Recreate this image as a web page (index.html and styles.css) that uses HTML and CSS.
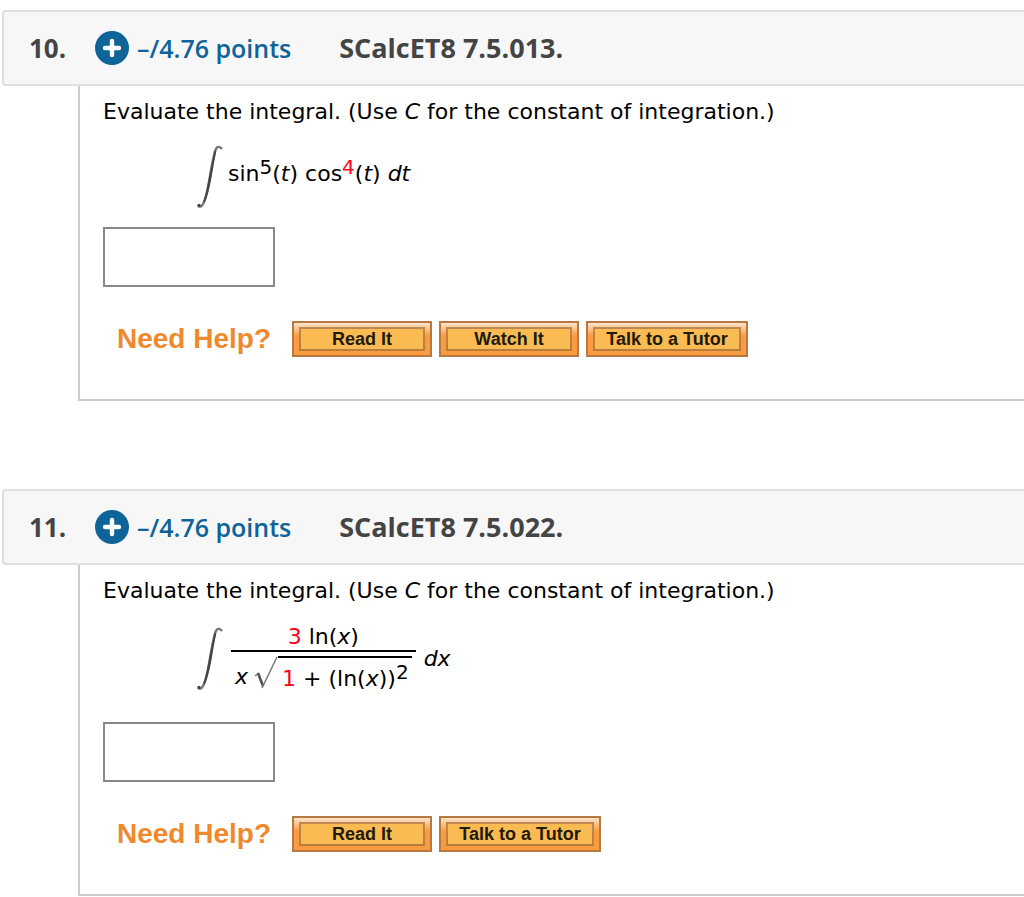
FILE: index.html
```html
<!DOCTYPE html>
<html lang="en">
<head>
<meta charset="utf-8">
<title>Homework questions</title>
<link rel="stylesheet" href="styles.css">
</head>
<body>
<svg class="defs" width="0" height="0" aria-hidden="true">
  <symbol id="integral" viewBox="0 0 26 64">
    <path d="M25 4C23 1 20 1 18.500 5C16.500 10 14.500 22 12.500 34C10.500 46 8.500 55 6 59C4.500 62 2.500 62 1 61" fill="none" stroke="#777" stroke-width="2.400"/>
    <path d="M18.500 6C16 15 14.500 25 12.500 34C10.500 45 9 52 7 57C10 51 12 42 14 31C15.500 21 17 13 18.500 6Z" fill="#222" stroke="#444" stroke-width="1.600"/>
    <circle cx="2" cy="60.500" r="1.700" fill="#444"/>
  </symbol>
  <symbol id="plus" viewBox="0 0 34 34">
    <circle cx="17" cy="17" r="17" fill="#0e6399"/>
    <path d="M17 10V24M10 17H24" stroke="#fff" stroke-width="4.400" stroke-linecap="round"/>
  </symbol>
</svg>
<main class="questions">
  <section class="question">
    <header class="question-header">
      <span class="number">10.</span>
      <a class="points" href="#q10"><svg class="plus" aria-hidden="true"><use href="#plus"/></svg>–/4.76 points</a>
      <h2 class="source">SCalcET8 7.5.013.</h2>
    </header>
    <div class="question-body" id="q10">
      <p class="prompt">Evaluate the integral. (Use <i>C</i> for the constant of integration.)</p>
      <div class="formula">
        <svg class="integral" aria-label="integral"><use href="#integral"/></svg>
        <span class="integrand">sin<sup>5</sup>(<i>t</i>) cos<sup class="value">4</sup>(<i>t</i>) <i>dt</i></span>
      </div>
      <input class="answer" type="text" aria-label="Answer to question 10">
      <div class="help">
        <span class="help-label">Need Help?</span>
        <button class="help-button" type="button">Read It</button>
        <button class="help-button" type="button">Watch It</button>
        <button class="help-button wide" type="button">Talk to a Tutor</button>
      </div>
    </div>
  </section>
  <section class="question">
    <header class="question-header">
      <span class="number">11.</span>
      <a class="points" href="#q11"><svg class="plus" aria-hidden="true"><use href="#plus"/></svg>–/4.76 points</a>
      <h2 class="source">SCalcET8 7.5.022.</h2>
    </header>
    <div class="question-body" id="q11">
      <p class="prompt">Evaluate the integral. (Use <i>C</i> for the constant of integration.)</p>
      <div class="formula tall">
        <svg class="integral" aria-label="integral"><use href="#integral"/></svg>
        <span class="fraction">
          <span class="numerator"><span class="value">3</span> ln(<i>x</i>)</span>
          <span class="denominator"><i>x</i><svg class="radical" viewBox="0 0 24 34" aria-hidden="true"><path d="M1 20L5 17" fill="none" stroke="#777" stroke-width="1.500"/><path d="M4 17L9 30" fill="none" stroke="#555" stroke-width="2.600"/><path d="M8 32L23 1" fill="none" stroke="#777" stroke-width="1.500"/></svg><span class="radicand"><span class="value">1</span> + (ln(<i>x</i>))<sup>2</sup></span></span>
        </span>
        <i class="differential">dx</i>
      </div>
      <input class="answer" type="text" aria-label="Answer to question 11">
      <div class="help">
        <span class="help-label">Need Help?</span>
        <button class="help-button" type="button">Read It</button>
        <button class="help-button wide" type="button">Talk to a Tutor</button>
      </div>
    </div>
  </section>
</main>
</body>
</html>
```
FILE: styles.css
```css
* {
  box-sizing: border-box;
}

body {
  margin: 0;
  background: #fff;
  color: #000;
  font: 22px/34px Verdana, "DejaVu Sans", sans-serif;
  overflow-x: hidden;
}

.defs {
  display: none;
}

.questions {
  display: flex;
  flex-direction: column;
  gap: 88px;
  padding: 10px 0 0 2px;
}

.question-header {
  display: flex;
  align-items: center;
  height: 76px;
  padding-left: 25px;
  border: 2px solid #dfdfdf;
  border-right: 0;
  border-radius: 4px 0 0 4px;
  background: #f7f7f7;
  color: #444;
  font-family: "Open Sans", sans-serif;
  font-size: 26px;
}

.number {
  width: 66px;
  font-weight: 700;
}

.points {
  display: flex;
  align-items: center;
  gap: 8px;
  color: #0e6399;
  font-size: 25px;
  font-weight: 600;
  text-decoration: none;
}

.plus {
  width: 34px;
  height: 34px;
}

.source {
  margin: 0 0 0 48px;
  font-size: 27px;
  font-weight: 700;
}

.question-body {
  margin-left: 76px;
  padding: 9px 0 42px 23px;
  border: 0 solid #ccc;
  border-width: 0 0 2px 2px;
}

.prompt {
  margin: 0;
}

.formula {
  display: flex;
  gap: 5px;
  height: 98px;
  padding: 16px 0 0 94px;
}

.tall {
  height: 114px;
  padding-top: 19px;
}

.integral {
  width: 26px;
  height: 64px;
}

.integrand {
  padding-top: 12px;
}

sup {
  font-size: 20px;
  line-height: 0;
  vertical-align: 7px;
}

.value {
  color: #ff0018;
}

.fraction {
  display: flex;
  flex-direction: column;
  margin-left: 3px;
}

.numerator {
  height: 25px;
  line-height: 20px;
  text-align: center;
  border-bottom: 2px solid #000;
}

.denominator {
  display: flex;
  padding: 4px 4px 0;
  line-height: 42px;
}

.radical {
  width: 24px;
  height: 34px;
  margin-left: 6px;
}

.radicand {
  padding: 0 3px 0 4px;
  border-top: 2px solid #000;
}

.differential {
  padding: 15px 0 0 3px;
}

.answer {
  display: block;
  width: 172px;
  height: 60px;
  padding: 0 8px;
  border: 2px solid #888;
  font: inherit;
}

.help {
  display: flex;
  align-items: center;
  gap: 7px;
  padding: 34px 0 0 14px;
}

.help-label {
  width: 168px;
  color: #ee8a2b;
  font: 700 28px/36px "Liberation Sans", Arial, sans-serif;
}

.help-button {
  width: 140px;
  height: 36px;
  padding: 0;
  border: 2px solid #b87842;
  background:
    linear-gradient(#fabb52, #fabb52) center / calc(100% - 14px) calc(100% - 12px) no-repeat,
    linear-gradient(#c08850, #b87c3c) center / calc(100% - 10px) calc(100% - 8px) no-repeat,
    linear-gradient(#ffe4cc, #fb9b40 40%);
  color: #211a08;
  font: 700 18px/24px "Liberation Sans", Arial, sans-serif;
}

.wide {
  width: 162px;
}
```
